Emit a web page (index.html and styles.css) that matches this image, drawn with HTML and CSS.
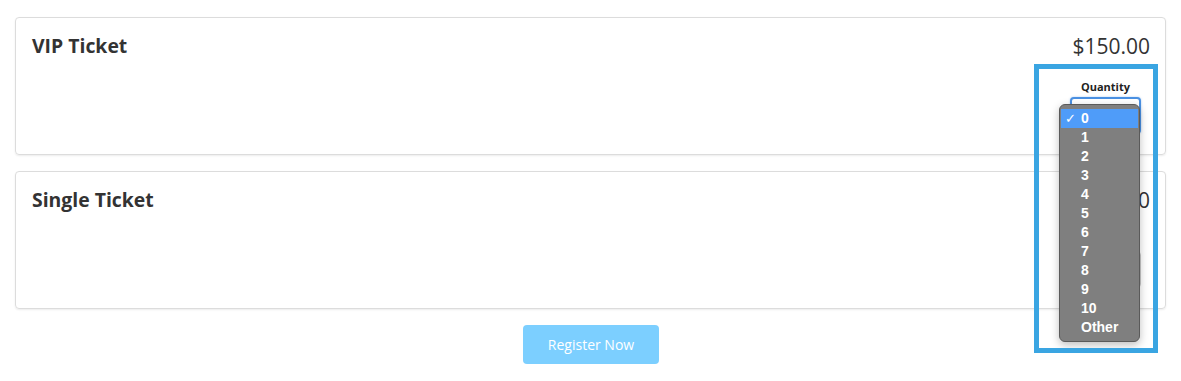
FILE: index.html
```html
<!DOCTYPE html>
<html>
<head>
<meta charset="utf-8">
<link rel="stylesheet" href="styles.css">
</head>
<body>
<div class="page">
  <div class="card">
    <div class="card-head">
      <h2 class="title">VIP Ticket</h2>
      <div class="price">$150.00</div>
    </div>
    <div class="qty">
      <label class="qty-label">Quantity</label>
      <div class="select focused"></div>
    </div>
  </div>
  <div class="card">
    <div class="card-head">
      <h2 class="title">Single Ticket</h2>
      <div class="price">$50.00</div>
    </div>
    <div class="qty">
      <label class="qty-label">Quantity</label>
      <div class="select"></div>
    </div>
  </div>
  <div class="actions">
    <button class="btn">Register Now</button>
  </div>

  <ul class="menu">
    <li class="item selected"><span class="check">✓</span>0</li>
    <li class="item">1</li>
    <li class="item">2</li>
    <li class="item">3</li>
    <li class="item">4</li>
    <li class="item">5</li>
    <li class="item">6</li>
    <li class="item">7</li>
    <li class="item">8</li>
    <li class="item">9</li>
    <li class="item">10</li>
    <li class="item">Other</li>
  </ul>
  <div class="highlight"></div>
</div>
</body>
</html>
```
FILE: styles.css
```css
* { box-sizing: border-box; }
html, body { margin: 0; padding: 0; background: #fff; }
body { font-family: "Open Sans", "Liberation Sans", sans-serif; color: #333; }
.page {
  position: relative;
  padding: 17px 15px 0 15px;
  display: flex;
  flex-direction: column;
  gap: 16px;
  width: 1181px;
  height: 381px;
}
.card {
  height: 138px;
  border: 1px solid #dcdcdc;
  border-radius: 4px;
  box-shadow: 0 1px 2px rgba(0,0,0,0.08);
  padding: 14px 15px 0 16px;
  display: flex;
  flex-direction: column;
}
.card-head {
  display: flex;
  justify-content: space-between;
  align-items: flex-start;
}
.title {
  margin: 0;
  font-size: 19.4px;
  font-weight: 700;
  line-height: 28px;
  color: #333;
}
.price {
  font-size: 21px;
  line-height: 28px;
  color: #333;
}
.qty {
  align-self: flex-end;
  margin-right: 9px;
  margin-top: 20px;
  display: flex;
  flex-direction: column;
  align-items: center;
  width: 71px;
}
.qty-label {
  font-size: 11px;
  font-weight: 700;
  line-height: 14px;
  color: #222;
  margin-bottom: 3px;
}
.select {
  width: 71px;
  height: 37px;
  border: 1px solid #c8c8c8;
  border-radius: 4px;
  background: #fff;
}
.select.focused {
  border: 2px solid #4a90e2;
  box-shadow: 0 0 2px rgba(74,144,226,0.5);
}
.actions {
  display: flex;
  justify-content: center;
  margin-left: 1px;
}
.btn {
  width: 136px;
  height: 39px;
  border: none;
  border-radius: 4px;
  background: #7ccfff;
  color: #fff;
  font-family: "Open Sans", "Liberation Sans", sans-serif;
  font-size: 14px;
}
.menu {
  position: absolute;
  left: 1059px;
  top: 104px;
  width: 81px;
  height: 238px;
  margin: 0;
  padding: 4px 1px 0 1px;
  list-style: none;
  background: #7f7f7f;
  border: 1px solid #5a5a5a;
  border-radius: 6px;
  box-shadow: 0 3px 8px rgba(0,0,0,0.25);
}
.item {
  position: relative;
  height: 19px;
  line-height: 19px;
  padding-left: 20px;
  font-family: "Liberation Sans", Arial, sans-serif;
  font-weight: 700;
  font-size: 14px;
  color: #fff;
}
.item.selected {
  background: #4f9cf9;
}
.check {
  position: absolute;
  left: 4px;
  top: 0;
  font-family: "DejaVu Sans", sans-serif;
  font-size: 13px;
  font-weight: 700;
}
.highlight {
  position: absolute;
  left: 1034px;
  top: 64px;
  width: 124px;
  height: 289px;
  border: 5px solid #3aa5e2;
  pointer-events: none;
}
```
